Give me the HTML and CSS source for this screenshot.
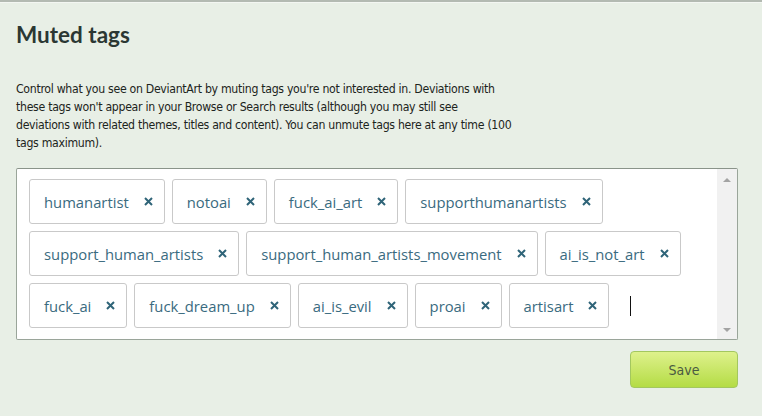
FILE: index.html
```html
<!DOCTYPE html>
<html lang="en">
<head>
    <meta charset="UTF-8">
    <meta name="viewport" content="width=device-width, initial-scale=1.0">
    <title>Muted tags</title>
    <link rel="stylesheet" href="styles.css">
</head>
<body>
    <div class="page">
        <h2 class="title">Muted tags</h2>
        <p class="intro">Control what you see on DeviantArt by muting tags you're not interested in. Deviations with these tags won't appear in your Browse or Search results (although you may still see deviations with related themes, titles and content). You can unmute tags here at any time (100 tags maximum).</p>

        <div class="tagbox">
            <div class="tags">
                <span class="tag">humanartist<svg class="x" viewBox="0 0 9 9"><path d="M1 1L8 8M8 1L1 8"/></svg></span>
                <span class="tag">notoai<svg class="x" viewBox="0 0 9 9"><path d="M1 1L8 8M8 1L1 8"/></svg></span>
                <span class="tag">fuck_ai_art<svg class="x" viewBox="0 0 9 9"><path d="M1 1L8 8M8 1L1 8"/></svg></span>
                <span class="tag">supporthumanartists<svg class="x" viewBox="0 0 9 9"><path d="M1 1L8 8M8 1L1 8"/></svg></span>
                <span class="tag">support_human_artists<svg class="x" viewBox="0 0 9 9"><path d="M1 1L8 8M8 1L1 8"/></svg></span>
                <span class="tag">support_human_artists_movement<svg class="x" viewBox="0 0 9 9"><path d="M1 1L8 8M8 1L1 8"/></svg></span>
                <span class="tag">ai_is_not_art<svg class="x" viewBox="0 0 9 9"><path d="M1 1L8 8M8 1L1 8"/></svg></span>
                <span class="tag">fuck_ai<svg class="x" viewBox="0 0 9 9"><path d="M1 1L8 8M8 1L1 8"/></svg></span>
                <span class="tag">fuck_dream_up<svg class="x" viewBox="0 0 9 9"><path d="M1 1L8 8M8 1L1 8"/></svg></span>
                <span class="tag">ai_is_evil<svg class="x" viewBox="0 0 9 9"><path d="M1 1L8 8M8 1L1 8"/></svg></span>
                <span class="tag">proai<svg class="x" viewBox="0 0 9 9"><path d="M1 1L8 8M8 1L1 8"/></svg></span>
                <span class="tag">artisart<svg class="x" viewBox="0 0 9 9"><path d="M1 1L8 8M8 1L1 8"/></svg></span>
                <span class="caret"></span>
            </div>
            <div class="scrollbar">
                <span class="arrow up"></span>
                <span class="arrow down"></span>
            </div>
        </div>

        <div class="actions">
            <button class="save">Save</button>
        </div>
    </div>
</body>
</html>
```

FILE: styles.css
```css
body
{
    margin: 0;
    background-color: #e8efe6;
    border-top: 2px solid #b3bab2;
    font-family: "DejaVu Sans Condensed", "DejaVu Sans", sans-serif;
}
.page
{
    padding: 0 24px 0 16px;
    border-top: 1px solid #f3f6f2;
}
.title
{
    margin: 0;
    padding-top: 16px;
    font-family: Lato, sans-serif;
    font-size: 22.5px;
    font-weight: bold;
    color: #2b3733;
    line-height: 32px;
}
.intro
{
    margin: 29px 0 0 0;
    width: 498px;
    font-size: 12.2px;
    letter-spacing: -0.3px;
    line-height: 18px;
    color: #1c2420;
}
.tagbox
{
    display: flex;
    margin-top: 16px;
    height: 170px;
    background: #ffffff;
    border: 1px solid #9aa59a;
    border-top-color: #8a948a;
    border-radius: 2px;
}
.tags
{
    flex: 1;
    display: flex;
    flex-wrap: wrap;
    align-content: flex-start;
    align-items: center;
    gap: 7px;
    padding: 10px 12px;
}
.tag
{
    display: flex;
    align-items: center;
    height: 43px;
    padding: 0 11px 0 14px;
    border: 1px solid #c9c9c9;
    border-radius: 3px;
    font-family: "Open Sans", sans-serif;
    font-size: 14.8px;
    color: #3a6b80;
}
.x
{
    width: 9px;
    height: 9px;
    margin-left: 15px;
    fill: none;
    stroke: #2f6478;
    stroke-width: 2;
}
.caret
{
    width: 1px;
    height: 20px;
    margin-left: 14px;
    background: #111111;
}
.scrollbar
{
    width: 20px;
    background: #f1f1f1;
    display: flex;
    flex-direction: column;
    justify-content: space-between;
    align-items: center;
    padding: 9px 0 7px 0;
}
.arrow
{
    width: 0;
    height: 0;
    border-left: 4px solid transparent;
    border-right: 4px solid transparent;
}
.up
{
    border-bottom: 4px solid #a3a3a3;
}
.down
{
    border-top: 4px solid #a3a3a3;
}
.actions
{
    display: flex;
    justify-content: flex-end;
    margin-top: 11px;
}
.save
{
    width: 108px;
    height: 37px;
    border: 1px solid #a3c75f;
    border-radius: 4px;
    background: linear-gradient(#def18c, #b4dc45);
    font-family: "DejaVu Sans Condensed", "DejaVu Sans", sans-serif;
    font-size: 14px;
    color: #4a5a42;
    cursor: pointer;
}
```
